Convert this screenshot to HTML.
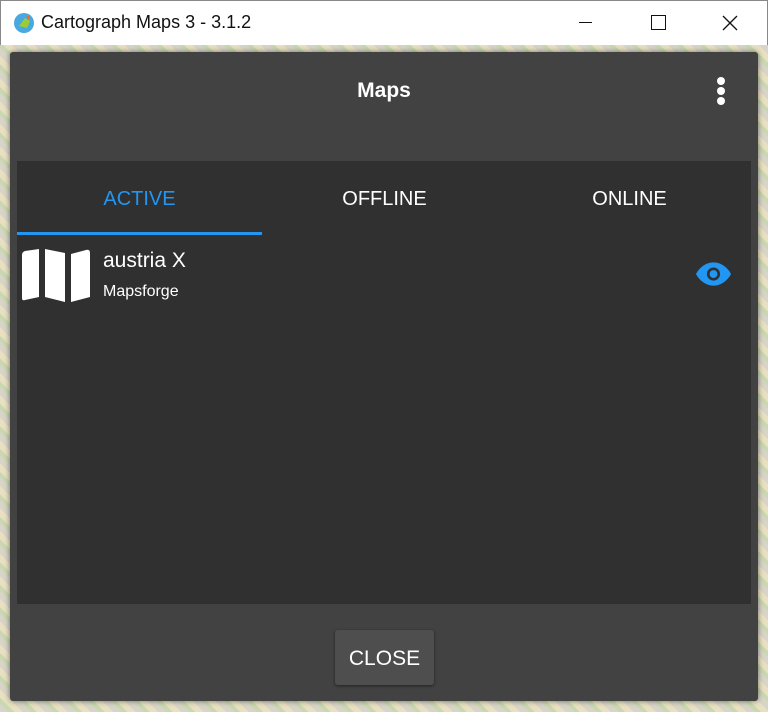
<!DOCTYPE html>
<html><head><style>
body{margin:0;width:768px;height:712px;overflow:hidden;font-family:"Liberation Sans","DejaVu Sans",sans-serif;position:relative;
background:repeating-linear-gradient(45deg,#d8d4c8 0 6px,#c9d8b0 6px 10px,#e8e0c0 10px 16px);}
.title{position:absolute;left:0;top:0;width:766px;height:44px;background:#fff;border:1px solid #888;border-bottom:none;}
.title .t{position:absolute;left:40px;top:11px;font-size:18px;color:#111;}
.dlg{position:absolute;left:10px;top:52px;width:748px;height:649px;background:#424242;border-radius:3px;box-shadow:0 0 6px rgba(0,0,0,.5);}
.inner{position:absolute;left:7px;top:109px;width:734px;height:443px;background:#303030;}
.tab{position:absolute;top:27px;font-size:20px;color:#fff;width:245px;text-align:center;}
</style></head><body>
<div class="title">
<svg style="position:absolute;left:12px;top:11px" width="22" height="22"><circle cx="11" cy="11" r="10" fill="#4aa8e0"/><path d="M6 14 L12 6 L17 9 L14 16 Z" fill="#9acd32"/><path d="M13 5 L17 3 L16 8Z" fill="#e07030"/></svg>
<div class="t">Cartograph Maps 3 - 3.1.2</div>
<div style="position:absolute;left:578px;top:21px;width:13px;height:1px;background:#111"></div>
<div style="position:absolute;left:650px;top:14px;width:13px;height:13px;border:1px solid #111"></div>
<svg style="position:absolute;left:721px;top:14px" width="16" height="16"><path d="M1 1L15 15M15 1L1 15" stroke="#111" stroke-width="1.3"/></svg>
</div>
<div class="dlg">
<div style="position:absolute;left:0;width:748px;top:27px;text-align:center;color:#fff;font-weight:bold;font-size:21px">Maps</div>
<svg style="position:absolute;left:705px;top:25px" width="12" height="30"><circle cx="6" cy="4" r="4" fill="#fff"/><circle cx="6" cy="14" r="4" fill="#fff"/><circle cx="6" cy="24" r="4" fill="#fff"/></svg>
<div class="inner">
<div class="tab" style="left:0;color:#2196f3">ACTIVE</div>
<div class="tab" style="left:245px">OFFLINE</div>
<div class="tab" style="left:490px">ONLINE</div>
<div style="position:absolute;left:0;top:71px;width:245px;height:3px;background:#2196f3"></div>
<svg style="position:absolute;left:3px;top:86px" width="72" height="56"><path d="M2 8 Q2 5 5 4 L19 2 L19 50 L5 53 Q2 54 2 51Z M25 2 L45 6 L45 55 L25 50Z M51 7 L66 3 Q70 2 70 6 L70 50 L51 55Z" fill="#fff"/></svg>
<div style="position:absolute;left:86px;top:88px;color:#fff;font-size:21px">austria X</div>
<div style="position:absolute;left:86px;top:122px;color:#fff;font-size:16px">Mapsforge</div>
<svg style="position:absolute;left:679px;top:101px" width="35" height="24" viewBox="0 0 24 16"><path d="M12 0C6.5 0 2 4 0 8c2 4 6.5 8 12 8s10-4 12-8C22 4 17.5 0 12 0z" fill="#2196f3"/><circle cx="12" cy="8" r="4.5" fill="#303030"/><circle cx="12" cy="8" r="2.7" fill="#2196f3"/></svg>
</div>
<div style="position:absolute;left:325px;top:578px;width:99px;height:55px;background:#4e4e4e;border-radius:3px;box-shadow:0 1px 3px rgba(0,0,0,.5);color:#fff;font-size:21px;text-align:center;line-height:57px">CLOSE</div>
</div>
</body></html>
